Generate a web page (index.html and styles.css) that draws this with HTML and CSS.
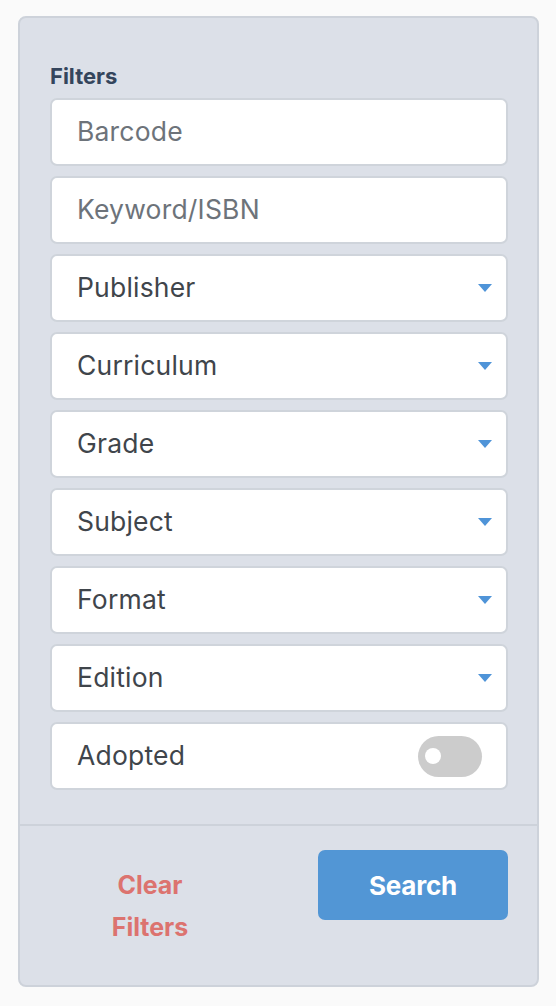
FILE: index.html
```html
<!DOCTYPE html>
<html lang="en">
<head>
<meta charset="utf-8">
<title>Filters</title>
<link rel="stylesheet" href="styles.css">
</head>
<body>
<aside class="panel">
  <div class="panel-body">
    <div class="label">Filters</div>
    <div class="fields">
      <div class="field placeholder">Barcode</div>
      <div class="field placeholder">Keyword/ISBN</div>
      <div class="field select"><span>Publisher</span><span class="caret"></span></div>
      <div class="field select"><span>Curriculum</span><span class="caret"></span></div>
      <div class="field select"><span>Grade</span><span class="caret"></span></div>
      <div class="field select"><span>Subject</span><span class="caret"></span></div>
      <div class="field select"><span>Format</span><span class="caret"></span></div>
      <div class="field select"><span>Edition</span><span class="caret"></span></div>
      <div class="field toggle-row"><span>Adopted</span><span class="toggle"><span class="knob"></span></span></div>
    </div>
  </div>
  <div class="panel-footer">
    <div class="clear">Clear<br>Filters</div>
    <div class="search">Search</div>
  </div>
</aside>
</body>
</html>
```
FILE: styles.css
```css
html, body {
  margin: 0;
  padding: 0;
  background: #fafafa;
}
body {
  font-family: Inter, "Liberation Sans", sans-serif;
}
.panel {
  box-sizing: border-box;
  width: 521px;
  height: 971px;
  margin: 16px 0 0 18px;
  background: #dce0e8;
  border: 2px solid #cdd2da;
  border-radius: 8px;
  display: flex;
  flex-direction: column;
}
.panel-body {
  padding: 46px 29px 0 30px;
  height: 806px;
  box-sizing: border-box;
}
.label {
  font-size: 22px;
  font-weight: 700;
  line-height: 24px;
  color: #34455c;
  margin-bottom: 10px;
}
.fields {
  display: flex;
  flex-direction: column;
  gap: 10px;
}
.field {
  box-sizing: border-box;
  height: 68px;
  background: #ffffff;
  border: 2px solid #cfd4db;
  border-radius: 7px;
  padding: 0 14px 2px 25px;
  display: flex;
  align-items: center;
  justify-content: space-between;
  font-size: 26.5px;
  letter-spacing: 0.2px;
  color: #40454b;
}
.field.placeholder {
  color: #6d737a;
}
.caret {
  width: 0;
  height: 0;
  border-left: 7.5px solid transparent;
  border-right: 7.5px solid transparent;
  border-top: 8px solid #4f94d8;
  margin-top: 2px;
}
.toggle-row {
  padding-right: 24px;
}
.toggle {
  width: 64px;
  height: 41px;
  border-radius: 21px;
  background: #cccccc;
  display: flex;
  align-items: center;
  padding-left: 7px;
  box-sizing: border-box;
  margin-top: 2px;
}
.knob {
  width: 16px;
  height: 16px;
  border-radius: 50%;
  background: #ffffff;
}
.panel-footer {
  border-top: 2px solid #cdd2da;
  flex: 1;
  display: flex;
  justify-content: space-between;
  align-items: flex-start;
  padding: 24px 29px 0 30px;
}
.clear {
  width: 200px;
  margin-top: 14px;
  text-align: center;
  font-size: 25px;
  line-height: 42px;
  font-weight: 700;
  color: #dc736f;
}
.search {
  width: 190px;
  height: 70px;
  box-sizing: border-box;
  background: #5296d5;
  border-radius: 7px;
  color: #ffffff;
  font-size: 26px;
  font-weight: 700;
  display: flex;
  align-items: center;
  justify-content: center;
  letter-spacing: -0.2px;
}
```
